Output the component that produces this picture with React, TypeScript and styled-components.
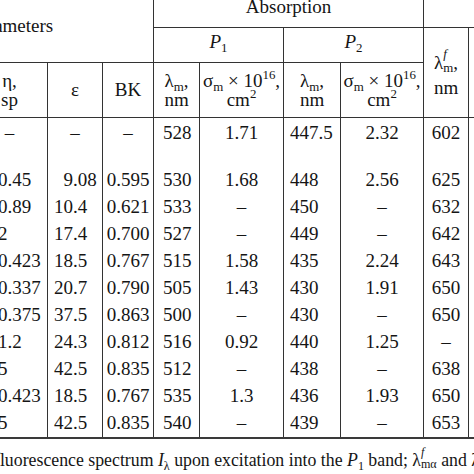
import React from "react";
import styled, { createGlobalStyle } from "styled-components";

const GlobalStyle = createGlobalStyle`
  html, body { margin: 0; padding: 0; background: #fff; overflow: hidden; }
  #root { width: 474px; height: 474px; }
`;

const Page = styled.div`
  width: 474px;
  height: 474px;
  overflow: hidden;
  background: #fff;
  font-family: "Liberation Serif", "Times New Roman", serif;
  color: #151515;
`;

const Sheet = styled.div`
  margin: -12px 0 0 -132px;
`;

const Table = styled.table`
  border-collapse: collapse;
  table-layout: fixed;
  width: 700px;
  font-size: 19px;
`;

const HeadRow = styled.tr<{ $h: number }>`
  height: ${(p) => p.$h}px;
`;

const Head = styled.th<{ $pt?: number; $pb?: number; $h?: number }>`
  border: 1px solid #333;
  padding: ${(p) => p.$pt ?? 0}px 0 ${(p) => p.$pb ?? 0}px;
  ${(p) => (p.$h ? `height: ${p.$h}px;` : "")}
  box-sizing: border-box;
  font-weight: normal;
  text-align: center;
  vertical-align: middle;
  line-height: 22px;
  white-space: nowrap;
`;

const Line = styled.div<{ $lh?: number }>`
  line-height: ${(p) => p.$lh ?? 19}px;
`;

const Row = styled.tr<{ $h: number }>`
  height: ${(p) => p.$h}px;
`;

const Cell = styled.td<{ $align: "left" | "center"; $pl: number; $pt: number; $last: boolean }>`
  border-left: 1px solid #333;
  border-right: 1px solid #333;
  border-bottom: ${(p) => (p.$last ? "2px solid #3a3a3a" : "none")};
  padding: ${(p) => p.$pt}px 0 0 ${(p) => p.$pl}px;
  text-align: ${(p) => p.$align};
  vertical-align: top;
  line-height: 27px;
  white-space: nowrap;
`;

const Sub = styled.sub`
  font-size: 0.68em;
  vertical-align: -0.3em;
  line-height: 0;
`;

const Sup = styled.sup`
  font-size: 0.68em;
  vertical-align: 0.62em;
  line-height: 0;
`;

const Stack = styled.span`
  display: inline-flex;
  flex-direction: column;
  align-items: flex-start;
  font-size: 0.68em;
  line-height: 1.05;
  vertical-align: 0.85em;
`;

const It = styled.i`
  font-style: italic;
`;

const FigPad = styled.span`
  display: inline-block;
  width: 0.5em;
`;

const Caption = styled.p`
  margin: 7px 0 0 -6px;
  font-size: 17.8px;
  line-height: 20px;
  white-space: nowrap;
`;

const widths = [103, 76, 55, 51, 46, 84, 57, 83, 45, 100];

type ColSpec = { align: "left" | "center"; pl: number };
const colSpec: ColSpec[] = [
  { align: "center", pl: 0 },
  { align: "left", pl: 26 },
  { align: "left", pl: 6 },
  { align: "center", pl: 0 },
  { align: "left", pl: 9 },
  { align: "center", pl: 0 },
  { align: "left", pl: 6 },
  { align: "center", pl: 0 },
  { align: "center", pl: 0 },
  { align: "center", pl: 0 },
];

const D = "–";

const rows: string[][] = [
  ["", D, D, D, "528", "1.71", "447.5", "2.32", "602", ""],
  ["", "0.45", "9.08", "0.595", "530", "1.68", "448", "2.56", "625", ""],
  ["", "0.89", "10.4", "0.621", "533", D, "450", D, "632", ""],
  ["", "2", "17.4", "0.700", "527", D, "449", D, "642", ""],
  ["", "0.423", "18.5", "0.767", "515", "1.58", "435", "2.24", "643", ""],
  ["", "0.337", "20.7", "0.790", "505", "1.43", "430", "1.91", "650", ""],
  ["", "0.375", "37.5", "0.863", "500", D, "430", D, "650", ""],
  ["", "1.2", "24.3", "0.812", "516", "0.92", "440", "1.25", D, ""],
  ["", "5", "42.5", "0.835", "512", D, "438", D, "638", ""],
  ["", "0.423", "18.5", "0.767", "535", "1.3", "436", "1.93", "650", ""],
  ["", "5", "42.5", "0.835", "540", D, "439", D, "653", ""],
];

const SigmaHead = () => (
  <>
    <Line>
      σ<Sub>m</Sub> × 10<Sup>16</Sup>,
    </Line>
    <Line>
      cm<Sup>2</Sup>
    </Line>
  </>
);

const LambdaHead = () => (
  <>
    <Line>
      λ<Sub>m</Sub>,
    </Line>
    <Line>nm</Line>
  </>
);

function renderValue(v: string, col: number) {
  if (col === 2 && v.length === 4 && v.indexOf(".") === 1) {
    return (
      <>
        <FigPad />
        {v}
      </>
    );
  }
  return v;
}

export default function App() {
  return (
    <Page>
      <GlobalStyle />
      <Sheet>
        <Table>
          <colgroup>
            {widths.map((w, i) => (
              <col key={i} style={{ width: w }} />
            ))}
          </colgroup>
          <thead>
            <HeadRow $h={39}>
              <Head colSpan={4} rowSpan={2}>
                Parameters
              </Head>
              <Head colSpan={4} $pb={2} $h={39}>
                Absorption
              </Head>
              <Head colSpan={2} $h={39} />
            </HeadRow>
            <HeadRow $h={35}>
              <Head colSpan={2} $pb={6} $h={35}>
                <It>P</It>
                <Sub>1</Sub>
              </Head>
              <Head colSpan={2} $pb={6} $h={35}>
                <It>P</It>
                <Sub>2</Sub>
              </Head>
              <Head rowSpan={2} $pt={2}>
                <Line $lh={25}>
                  λ
                  <Stack>
                    <It>f</It>
                    <span>m</span>
                  </Stack>
                  ,
                </Line>
                <Line $lh={25}>nm</Line>
              </Head>
              <Head rowSpan={2} />
            </HeadRow>
            <HeadRow $h={55}>
              <Head $h={55} />
              <Head $h={55}>
                <Line>η,</Line>
                <Line>sp</Line>
              </Head>
              <Head $h={55}>ε</Head>
              <Head $h={55}>BK</Head>
              <Head $h={55}>
                <LambdaHead />
              </Head>
              <Head $h={55}>
                <SigmaHead />
              </Head>
              <Head $h={55}>
                <LambdaHead />
              </Head>
              <Head $h={55}>
                <SigmaHead />
              </Head>
            </HeadRow>
          </thead>
          <tbody>
            {rows.map((r, ri) => {
              const first = ri === 0;
              const last = ri === rows.length - 1;
              const h = first ? 48 : last ? 29 : 27;
              return (
                <Row key={ri} $h={h}>
                  {r.map((v, ci) => {
                    const spec = colSpec[ci];
                    const centerDash = first && (ci === 1 || ci === 2);
                    return (
                      <Cell
                        key={ci}
                        $align={centerDash ? "center" : spec.align}
                        $pl={centerDash ? 0 : spec.pl}
                        $pt={first ? 1 : 0}
                        $last={last}
                      >
                        {renderValue(v, ci)}
                      </Cell>
                    );
                  })}
                </Row>
              );
            })}
          </tbody>
        </Table>
      </Sheet>
      <Caption>
        fluorescence spectrum <It>I</It>
        <Sub>λ</Sub> upon excitation into the <It>P</It>
        <Sub>1</Sub> band; λ
        <Stack>
          <It>f</It>
          <span>mα</span>
        </Stack>{" "}
        and λ
        <Stack>
          <It>f</It>
          <span>mβ</span>
        </Stack>{" "}
        are the positions of the maxima
      </Caption>
    </Page>
  );
}
